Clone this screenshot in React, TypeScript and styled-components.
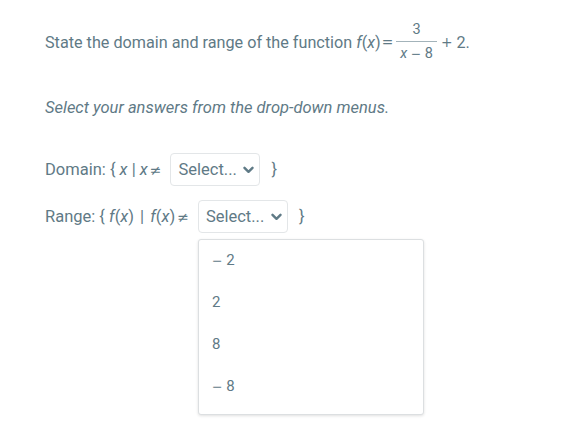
import React from "react";
import styled, { createGlobalStyle } from "styled-components";

const Global = createGlobalStyle`
  html, body { margin: 0; padding: 0; background: #fff; }
  body { font-family: Roboto, "Liberation Sans", sans-serif; color: #5f7a86; }
`;

const Page = styled.div`
  padding: 20px 0 0 45px;
  width: 569px;
  height: 437px;
  box-sizing: border-box;
  font-size: 16.5px;
`;

const Question = styled.div`
  display: flex;
  align-items: center;
  height: 44px;
  font-size: 16.2px;
  white-space: nowrap;
`;

const MathI = styled.span`
  font-style: italic;
`;

const Bar = styled.span<{ $m?: number }>`
  margin: 0 ${(p) => p.$m ?? 0}px;
`;

const Sym = styled.span<{ $m?: number }>`
  font-family: "DejaVu Sans", sans-serif;
  font-size: 0.85em;
  margin: 0 ${(p) => p.$m ?? 2}px;
`;

const Frac = styled.span`
  display: inline-flex;
  flex-direction: column;
  align-items: center;
  margin: 0 4px 0 2px;
  font-size: 14.5px;
  line-height: 17px;
`;

const Num = styled.span`
  padding: 0 4px 3px;
`;

const Den = styled.span`
  border-top: 1px solid #a3b3ba;
  padding: 3px 4px 0;
`;

const Instruction = styled.p`
  margin: 33px 0 0;
  font-style: italic;
  line-height: 22px;
`;

const Row = styled.div<{ $mt: number }>`
  display: flex;
  align-items: center;
  gap: 5px;
  margin-top: ${(p) => p.$mt}px;
  white-space: nowrap;
`;

const SelectBox = styled.div`
  display: flex;
  align-items: center;
  justify-content: space-between;
  width: 90px;
  height: 33px;
  padding: 0 5px 0 7px;
  box-sizing: border-box;
  border: 1px solid #e3e6e8;
  border-radius: 4px;
  margin: 0 6px 0 2px;
`;

const Field = styled.div`
  position: relative;
`;

const Menu = styled.ul`
  position: absolute;
  left: 2px;
  top: 39px;
  width: 226px;
  margin: 0;
  padding: 4px 0 2px;
  list-style: none;
  background: #fff;
  border: 1px solid #dcdfe1;
  border-radius: 3px;
  box-shadow: 0 1px 3px rgba(0, 0, 0, 0.12);
  box-sizing: border-box;
  z-index: 2;
`;

const Item = styled.li`
  height: 42px;
  line-height: 32px;
  padding-left: 13px;
  font-size: 15px;
`;

const Chevron = () => (
  <svg width="11" height="8" viewBox="0 0 11 8">
    <path d="M1.5 1.8 L5.5 5.8 L9.5 1.8" fill="none" stroke="#5f7a86" strokeWidth="2.4" strokeLinecap="round" strokeLinejoin="round" />
  </svg>
);

const Minus = () => <Sym $m={0}>−</Sym>;

export default function App() {
  return (
    <Page>
      <Global />
      <Question>
        State the domain and range of the function&nbsp;<MathI>f</MathI>(<MathI>x</MathI>)<Sym $m={1}>=</Sym>
        <Frac>
          <Num>3</Num>
          <Den><MathI>x</MathI> <Minus /> 8</Den>
        </Frac>
        <Sym $m={0}>+</Sym>&nbsp;2.
      </Question>
      <Instruction>Select your answers from the drop-down menus.</Instruction>
      <Row $mt={34}>
        <span>Domain: {"{"} <MathI>x</MathI> | <MathI>x</MathI><Sym>≠</Sym></span>
        <SelectBox>Select... <Chevron /></SelectBox>
        <span>{"}"}</span>
      </Row>
      <Row $mt={14}>
        <span>Range: {"{"} <MathI>f</MathI>(<MathI>x</MathI>) <Bar $m={2}>|</Bar> <MathI>f</MathI>(<MathI>x</MathI>)<Sym>≠</Sym></span>
        <Field>
          <SelectBox>Select... <Chevron /></SelectBox>
          <Menu>
            <Item><Minus /> 2</Item>
            <Item>2</Item>
            <Item>8</Item>
            <Item><Minus /> 8</Item>
          </Menu>
        </Field>
        <span>{"}"}</span>
      </Row>
    </Page>
  );
}
